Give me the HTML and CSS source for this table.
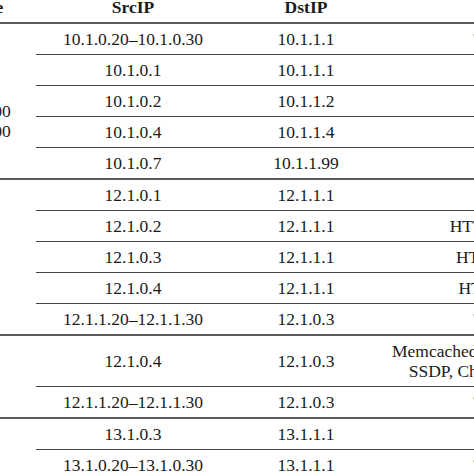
FILE: index.html
```html
<!DOCTYPE html>
<html>
<head>
<meta charset="utf-8">
<link rel="stylesheet" href="styles.css">
</head>
<body>
<table class="tbl">
  <colgroup>
    <col class="c-time">
    <col class="c-src">
    <col class="c-dst">
    <col class="c-type">
  </colgroup>
  <thead>
    <tr><th>Time</th><th>SrcIP</th><th>DstIP</th><th>Type</th></tr>
  </thead>
  <tbody class="grp">
    <tr><td rowspan="5" class="time">D1<br>A<br>9:00:00<br>9:30:00</td><td>10.1.0.20–10.1.0.30</td><td>10.1.1.1</td><td>TCP Syn</td></tr>
    <tr class="sub"><td>10.1.0.1</td><td>10.1.1.1</td><td>ICMP</td></tr>
    <tr class="sub"><td>10.1.0.2</td><td>10.1.1.2</td><td>UDP</td></tr>
    <tr class="sub"><td>10.1.0.4</td><td>10.1.1.4</td><td>Smurf</td></tr>
    <tr class="sub"><td>10.1.0.7</td><td>10.1.1.99</td><td>Ping</td></tr>
  </tbody>
  <tbody class="grp">
    <tr><td rowspan="5" class="time">D2</td><td>12.1.0.1</td><td>12.1.1.1</td><td>UDP</td></tr>
    <tr class="sub"><td>12.1.0.2</td><td>12.1.1.1</td><td>HTTP Flooding</td></tr>
    <tr class="sub"><td>12.1.0.3</td><td>12.1.1.1</td><td>HTTP request</td></tr>
    <tr class="sub"><td>12.1.0.4</td><td>12.1.1.1</td><td>HTTP RUDy</td></tr>
    <tr class="sub"><td>12.1.1.20–12.1.1.30</td><td>12.1.0.3</td><td>TCP Syn</td></tr>
  </tbody>
  <tbody class="grp">
    <tr><td rowspan="2" class="time">D3</td><td>12.1.0.4</td><td>12.1.0.3</td><td>Memcached, NTP, DNS, LDAP,<br>SSDP, CharGEN, NetBIOS</td></tr>
    <tr class="sub"><td>12.1.1.20–12.1.1.30</td><td>12.1.0.3</td><td>TCP Syn</td></tr>
  </tbody>
  <tbody class="grp">
    <tr><td rowspan="2" class="time">D4</td><td>13.1.0.3</td><td>13.1.1.1</td><td>ICMP</td></tr>
    <tr class="sub"><td>13.1.0.20–13.1.0.30</td><td>13.1.1.1</td><td>TCP Syn</td></tr>
  </tbody>
</table>
</body>
</html>
```
FILE: styles.css
```css
html, body {
  margin: 0;
  padding: 0;
  overflow: hidden;
  background: #ffffff;
}

.tbl {
  border-collapse: collapse;
  table-layout: fixed;
  width: 696px;
  margin: -8px 0 0 -68px;
  font-family: "Liberation Serif", "Times New Roman", serif;
  font-size: 17.5px;
  line-height: 20px;
  color: #1a1a1a;
}

.c-time { width: 104px; }
.c-src { width: 194px; }
.c-dst { width: 152px; }
.c-type { width: 246px; }

.tbl th,
.tbl td {
  padding: 5px 0;
  text-align: center;
  vertical-align: middle;
  white-space: nowrap;
}

.tbl th {
  font-weight: bold;
  border-bottom: 2px solid #5c5c5c;
}

.grp + .grp {
  border-top: 2px solid #5c5c5c;
}

.sub td {
  border-top: 1px solid #444444;
}
```
